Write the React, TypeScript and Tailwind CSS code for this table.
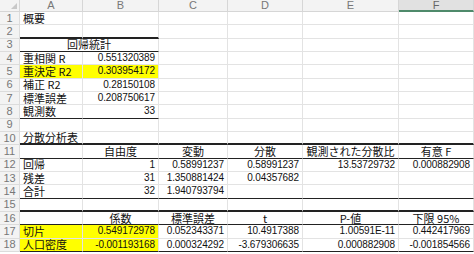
import React from "react";

type Cell = { t?: string; a?: "l" | "r" | "c"; span?: number };
type Row = { cells: Cell[]; b?: "thin" | "thick"; bAB?: "thin" | "thick"; yellowAB?: boolean };

const rows: Row[] = [
  { cells: [{ t: "概要" }, {}, {}, {}, {}, {}] },
  { cells: [{}, {}, {}, {}, {}, {}], bAB: "thick" },
  { cells: [{ t: "回帰統計", a: "c", span: 2 }, {}, {}, {}, {}], bAB: "thin" },
  { cells: [{ t: "重相関 R" }, { t: "0.551320389", a: "r" }, {}, {}, {}, {}] },
  { cells: [{ t: "重決定 R2" }, { t: "0.303954172", a: "r" }, {}, {}, {}, {}], yellowAB: true },
  { cells: [{ t: "補正 R2" }, { t: "0.28150108", a: "r" }, {}, {}, {}, {}] },
  { cells: [{ t: "標準誤差" }, { t: "0.208750617", a: "r" }, {}, {}, {}, {}] },
  { cells: [{ t: "観測数" }, { t: "33", a: "r" }, {}, {}, {}, {}], bAB: "thin" },
  { cells: [{}, {}, {}, {}, {}, {}] },
  { cells: [{ t: "分散分析表" }, {}, {}, {}, {}, {}], b: "thick" },
  {
    cells: [{}, { t: "自由度", a: "c" }, { t: "変動", a: "c" }, { t: "分散", a: "c" }, { t: "観測された分散比", a: "c" }, { t: "有意 F", a: "c" }],
    b: "thin",
  },
  {
    cells: [{ t: "回帰" }, { t: "1", a: "r" }, { t: "0.58991237", a: "r" }, { t: "0.58991237", a: "r" }, { t: "13.53729732", a: "r" }, { t: "0.000882908", a: "r" }],
  },
  { cells: [{ t: "残差" }, { t: "31", a: "r" }, { t: "1.350881424", a: "r" }, { t: "0.04357682", a: "r" }, {}, {}] },
  { cells: [{ t: "合計" }, { t: "32", a: "r" }, { t: "1.940793794", a: "r" }, {}, {}, {}], b: "thin" },
  { cells: [{}, {}, {}, {}, {}, {}], b: "thick" },
  {
    cells: [{}, { t: "係数", a: "c" }, { t: "標準誤差", a: "c" }, { t: "t", a: "c" }, { t: "P-値", a: "c" }, { t: "下限 95%", a: "c" }],
    b: "thin",
  },
  {
    cells: [{ t: "切片" }, { t: "0.549172978", a: "r" }, { t: "0.052343371", a: "r" }, { t: "10.4917388", a: "r" }, { t: "1.00591E-11", a: "r" }, { t: "0.442417969", a: "r" }],
    yellowAB: true,
  },
  {
    cells: [{ t: "人口密度" }, { t: "-0.001193168", a: "r" }, { t: "0.000324292", a: "r" }, { t: "-3.679306635", a: "r" }, { t: "0.000882908", a: "r" }, { t: "-0.001854566", a: "r" }],
    yellowAB: true,
    b: "thin",
  },
];

const letters = ["A", "B", "C", "D", "E", "F"];

function isNum(t?: string) {
  return !!t && /^[-0-9.E]+$/.test(t);
}

export default function App() {
  return (
    <div className="w-[474px] h-[254px] overflow-hidden bg-white select-none">
      <div className="grid grid-cols-[20px_63px_76px_69px_75px_96px_75px]">
        {/* header row */}
        <div className="relative h-[12px] bg-[#f3f3f3] border-r border-b border-[#d6d6d6]">
          <div className="absolute right-[2px] bottom-[2px] w-0 h-0 border-l-[6px] border-l-transparent border-b-[6px] border-b-[#c8c8c8]" />
        </div>
        {letters.map((l) =>
          l === "F" ? (
            <div
              key={l}
              className="h-[12px] bg-[#e1e1e1] border-r border-r-[#d6d6d6] border-b-2 border-b-[#4f8a6b] flex items-center justify-center text-[11px] leading-none text-[#666] font-['Liberation_Sans',sans-serif]"
            >
              {l}
            </div>
          ) : (
            <div
              key={l}
              className="h-[12px] bg-[#f3f3f3] border-r border-b border-[#d6d6d6] flex items-center justify-center text-[11px] leading-none text-[#777] font-['Liberation_Sans',sans-serif]"
            >
              {l}
            </div>
          )
        )}
        {rows.map((row, ri) => {
          const cells: React.ReactNode[] = [];
          cells.push(
            <div
              key={`n${ri}`}
              className="h-[13.33px] bg-[#f3f3f3] border-r border-b border-[#dcdcdc] flex items-center justify-center text-[11px] leading-none text-[#777] font-['Liberation_Sans',sans-serif]"
            >
              {ri + 1}
            </div>
          );
          let col = 0;
          row.cells.forEach((c, ci) => {
            const span = c.span ?? 1;
            const inAB = col < 2;
            const bottom = row.b ?? (inAB ? row.bAB : undefined);
            const bcls =
              bottom === "thick"
                ? "border-b-2 border-b-[#222]"
                : bottom === "thin"
                ? "border-b border-b-[#222]"
                : "border-b border-b-[#e3e3e3]";
            const bg = row.yellowAB && inAB ? "bg-[#ffff00]" : "bg-white";
            const align =
              c.a === "r" ? "justify-end pr-[3px]" : c.a === "c" ? "justify-center" : "justify-start pl-[3px]";
            const font = isNum(c.t)
              ? "text-[10px] font-['Liberation_Sans','Noto_Sans_CJK_JP',sans-serif] tracking-[-0.1px]"
              : "text-[11px] font-['Noto_Sans_CJK_JP','Liberation_Sans',sans-serif]";
            const spanCls = span === 2 ? "col-span-2" : "";
            cells.push(
              <div
                key={`c${ri}-${ci}`}
                className={`h-[13.33px] border-r border-r-[#e3e3e3] ${bcls} ${bg} ${spanCls} flex items-center ${align} ${font} leading-none text-[#111] whitespace-nowrap overflow-visible`}
              >
                {c.t ?? ""}
              </div>
            );
            col += span;
          });
          return cells;
        })}
      </div>
    </div>
  );
}
